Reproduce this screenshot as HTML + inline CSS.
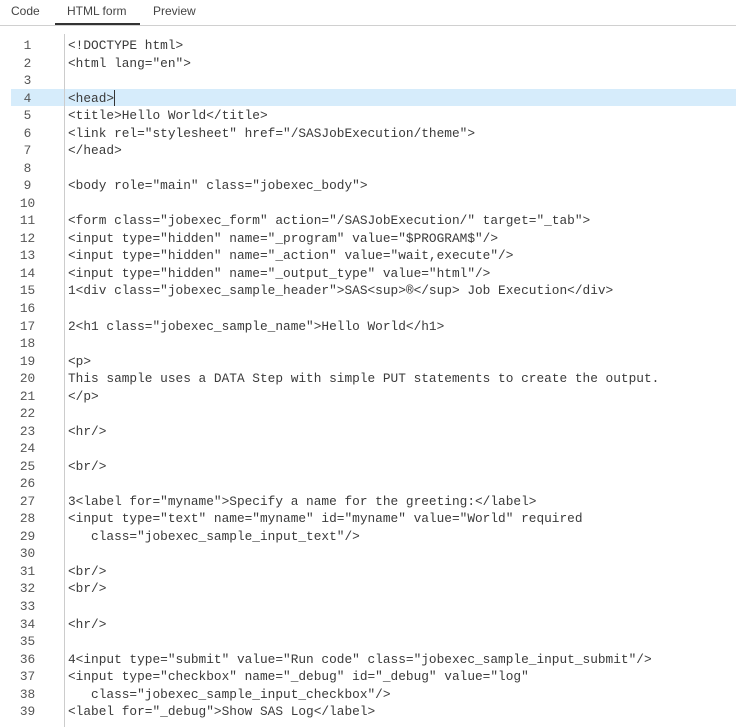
<!DOCTYPE html>
<html><head><style>
body{margin:0;width:736px;height:727px;background:#fff;overflow:hidden;font-family:"Liberation Sans",sans-serif;position:relative}
.tabs{position:absolute;top:0;left:0;width:736px;height:25px;border-bottom:1px solid #d0d0d0}
.tab{position:absolute;top:4px;font-size:12px;color:#444}
.act{position:absolute;left:55px;top:23px;width:85px;height:2px;background:#333}
.gut{position:absolute;left:64px;top:34px;width:1px;height:693px;background:#ccc}
.hl{position:absolute;left:11px;top:89px;width:725px;height:17px;background:#d6ecfb}
.code{position:absolute;top:37px;left:0;font-family:"Liberation Mono",monospace;font-size:12.8px;line-height:17.53px;color:#3a3a3a;white-space:pre}
.ln{position:absolute;left:0;width:55px;text-align:center;color:#555}
.tx{position:absolute;left:68px}
.cur{position:absolute;left:114px;top:90px;width:1px;height:16px;background:#333}
</style></head><body>
<div class="tabs"><span class="tab" style="left:11px">Code</span><span class="tab" style="left:67px">HTML form</span><span class="tab" style="left:153px">Preview</span><div class="act"></div></div>
<div class="hl"></div>
<div class="gut"></div>
<div class="code"><div class="ln">1
2
3
4
5
6
7
8
9
10
11
12
13
14
15
16
17
18
19
20
21
22
23
24
25
26
27
28
29
30
31
32
33
34
35
36
37
38
39</div><div class="tx">&lt;!DOCTYPE html&gt;
&lt;html lang="en"&gt;

&lt;head&gt;
&lt;title&gt;Hello World&lt;/title&gt;
&lt;link rel="stylesheet" href="/SASJobExecution/theme"&gt;
&lt;/head&gt;

&lt;body role="main" class="jobexec_body"&gt;

&lt;form class="jobexec_form" action="/SASJobExecution/" target="_tab"&gt;
&lt;input type="hidden" name="_program" value="$PROGRAM$"/&gt;
&lt;input type="hidden" name="_action" value="wait,execute"/&gt;
&lt;input type="hidden" name="_output_type" value="html"/&gt;
1&lt;div class="jobexec_sample_header"&gt;SAS&lt;sup&gt;®&lt;/sup&gt; Job Execution&lt;/div&gt;

2&lt;h1 class="jobexec_sample_name"&gt;Hello World&lt;/h1&gt;

&lt;p&gt;
This sample uses a DATA Step with simple PUT statements to create the output.
&lt;/p&gt;

&lt;hr/&gt;

&lt;br/&gt;

3&lt;label for="myname"&gt;Specify a name for the greeting:&lt;/label&gt;
&lt;input type="text" name="myname" id="myname" value="World" required
   class="jobexec_sample_input_text"/&gt;

&lt;br/&gt;
&lt;br/&gt;

&lt;hr/&gt;

4&lt;input type="submit" value="Run code" class="jobexec_sample_input_submit"/&gt;
&lt;input type="checkbox" name="_debug" id="_debug" value="log"
   class="jobexec_sample_input_checkbox"/&gt;
&lt;label for="_debug"&gt;Show SAS Log&lt;/label&gt;</div></div>
<div class="cur"></div>
</body></html>
